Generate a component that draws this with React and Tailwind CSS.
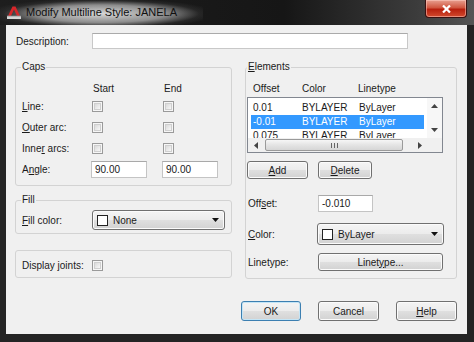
import React from "react";

const U = ({ children }) => <span className="underline underline-offset-[1px]">{children}</span>;

const Check = () => (
  <span className="flex h-[11px] w-[11px] items-center justify-center border border-[#9a9a9a] bg-[#f6f6f6]">
    <span className="h-[7px] w-[7px] border border-[#cfcfcf] bg-[linear-gradient(135deg,#dadada,#f7f7f7)]" />
  </span>
);

const DownTri = () => (
  <svg width="7" height="4" viewBox="0 0 7 4"><path d="M0 0h7L3.5 4z" fill="#111" /></svg>
);

function Btn({ children, className = "", focused = false }) {
  return (
    <div
      className={`flex items-center justify-center rounded-[3px] border bg-[linear-gradient(#f4f4f4_0%,#ececec_48%,#dfdfdf_52%,#d2d2d2_100%)] ${
        focused
          ? "border-[#3c7fb1] shadow-[inset_0_0_0_1px_#c4e5f6]"
          : "border-[#707070] shadow-[inset_0_0_0_1px_#fbfbfb]"
      } ${className}`}
    >
      {children}
    </div>
  );
}

function Combo({ label, className = "" }) {
  return (
    <Btn className={`!justify-start pl-[4px] pr-[5px] ${className}`}>
      <span className="h-[11px] w-[11px] border border-[#222] bg-white" />
      <span className="ml-[5px] flex-1">{label}</span>
      <DownTri />
    </Btn>
  );
}

const TextBox = ({ children, className = "" }) => (
  <div className={`flex items-center bg-white border border-[#c4c4c4] border-t-[#a9a9a9] pl-[3px] ${className}`}>
    {children}
  </div>
);

const Arrow = ({ dir }) => {
  if (dir === "left" || dir === "right") {
    return (
      <svg width="4" height="7" viewBox="0 0 4 7">
        <path d={dir === "left" ? "M4 0v7L0 3.5z" : "M0 0v7L4 3.5z"} fill="#444" />
      </svg>
    );
  }
  return (
    <svg width="7" height="4" viewBox="0 0 7 4">
      <path d={dir === "up" ? "M0 4h7L3.5 0z" : "M0 0h7L3.5 4z"} fill="#444" />
    </svg>
  );
};

const Row = ({ o, c, l, sel = false }) => (
  <div
    className={`grid h-[14px] grid-cols-[49px_57px_1fr] items-center pl-[2px] leading-[14px] ${
      sel ? "bg-[#3399ff] text-white" : ""
    }`}
  >
    <span>{o}</span>
    <span>{c}</span>
    <span>{l}</span>
  </div>
);

export default function App() {
  return (
    <div className="flex h-[342px] w-[474px] flex-col overflow-hidden bg-[#242424] font-['Liberation_Sans',Arial,sans-serif] text-[10px] text-[#1a1a1a]">
      {/* Title bar */}
      <div className="flex h-[25px] items-start bg-[linear-gradient(90deg,#1e1e1e_0%,#161616_60%,#3c3c3c_88%,#555555_100%)]">
        <div className="flex h-[25px] items-center gap-[5px] pl-[7px] pr-[26px] bg-[radial-gradient(ellipse_at_50%_55%,rgba(215,215,215,1)_0%,rgba(160,160,160,0.85)_45%,rgba(60,60,60,0.4)_68%,rgba(30,30,30,0)_80%)]">
          <svg width="14" height="13" viewBox="0 0 14 13">
            <path d="M1 10 L5.5 0.5 L8.5 0.5 L13 10 L10 10 L7 3.5 L4 10Z" fill="#d8262a" />
            <path d="M0 10h14v3H0z" fill="#d6d6d6" />
            <path d="M0 10h14" stroke="#888" strokeWidth="0.8" />
          </svg>
          <span className="text-[11px] text-[#101010]">Modify Multiline Style: JANELA</span>
        </div>
        <div className="ml-auto mr-[7px] flex h-[18px] w-[42px] items-center justify-center rounded-b-[4px] border border-t-0 border-[#3a1010] bg-[linear-gradient(#e8a090_0%,#d0563f_45%,#b8200e_55%,#d24a2e_100%)] shadow-[inset_0_0_0_1px_rgba(255,210,200,0.5)]">
          <svg width="9" height="8" viewBox="0 0 9 8">
            <path d="M1 0.5 L8 7.5 M8 0.5 L1 7.5" stroke="#fff" strokeWidth="2.2" />
          </svg>
        </div>
      </div>

      {/* Client area */}
      <div className="ml-[6px] flex h-[309px] w-[461px] flex-col bg-[#f0f0f0]">
        <div className="mt-[8px] flex h-[16px] items-center pl-[10px]">
          <span className="w-[76px]">Description:</span>
          <div className="h-[16px] w-[316px] border border-[#c8c8c8] border-t-[#aaaaaa] bg-white" />
        </div>

        <div className="mt-[12px] flex gap-[13px] pl-[9px]">
          {/* Left column */}
          <div className="flex w-[217px] flex-col">
            <fieldset className="h-[125px] rounded-[3px] border border-[#d3d3d3] px-[5px]">
              <legend className="h-[12px] px-[1px] leading-[12px]">Caps</legend>
              <div className="grid grid-cols-[70px_71px_60px] pl-[1px] pt-[7px]">
                <span className="h-[16px]" />
                <span className="flex h-[16px] items-center pl-[1px]">Start</span>
                <span className="flex h-[16px] items-center pl-[1px]">End</span>

                <span className="flex h-[21px] items-center"><span><U>L</U>ine:</span></span>
                <span className="flex h-[21px] items-center"><Check /></span>
                <span className="flex h-[21px] items-center"><Check /></span>

                <span className="flex h-[21px] items-center"><span><U>O</U>uter arc:</span></span>
                <span className="flex h-[21px] items-center"><Check /></span>
                <span className="flex h-[21px] items-center"><Check /></span>

                <span className="flex h-[21px] items-center"><span>Inne<U>r</U> arcs:</span></span>
                <span className="flex h-[21px] items-center"><Check /></span>
                <span className="flex h-[21px] items-center"><Check /></span>

                <span className="flex h-[21px] items-center"><span>A<U>n</U>gle:</span></span>
                <span className="flex h-[21px] items-center">
                  <TextBox className="-ml-[1px] h-[17px] w-[56px]">90.00</TextBox>
                </span>
                <span className="flex h-[21px] items-center">
                  <TextBox className="-ml-[1px] h-[17px] w-[56px]">90.00</TextBox>
                </span>
              </div>
            </fieldset>

            <fieldset className="mt-[8px] h-[40px] rounded-[3px] border border-[#d3d3d3] px-[5px]">
              <legend className="h-[12px] px-[1px] leading-[12px]">Fill</legend>
              <div className="flex items-center pl-[1px] pt-[4px]">
                <span className="w-[70px]"><U>F</U>ill color:</span>
                <Combo label="None" className="h-[20px] w-[133px]" />
              </div>
            </fieldset>

            <div className="mt-[16px] flex h-[28px] items-center rounded-[3px] border border-[#d3d3d3] pl-[6px] pt-[3px]">
              <span className="w-[70px]">Display joints:</span>
              <Check />
            </div>
          </div>

          {/* Right column */}
          <fieldset className="h-[218px] w-[212px] rounded-[3px] border border-[#d3d3d3] px-[1px]">
            <legend className="h-[12px] px-[1px] leading-[12px]"><U>E</U>lements</legend>
            <div className="flex flex-col pt-[7px]">
              <div className="grid h-[16px] grid-cols-[49px_56px_1fr] items-center pl-[6px]">
                <span>Offset</span>
                <span>Color</span>
                <span>Linetype</span>
              </div>

              <div className="mt-[1px] flex h-[56px] w-[196px] flex-col border border-[#828790] bg-white">
                <div className="flex h-[40px]">
                  <div className="w-[179px] overflow-hidden px-[3px] pt-[3px]">
                    <Row o="0.01" c="BYLAYER" l="ByLayer" />
                    <Row o="-0.01" c="BYLAYER" l="ByLayer" sel />
                    <Row o="0.075" c="BYLAYER" l="ByLayer" />
                  </div>
                  <div className="flex w-[15px] flex-col items-center justify-between bg-[#f7f7f7] py-[6px]">
                    <Arrow dir="up" />
                    <Arrow dir="down" />
                  </div>
                </div>
                <div className="flex h-[14px]">
                  <div className="flex w-[179px] items-center bg-[#f0f0f0]">
                    <span className="flex w-[15px] justify-center"><Arrow dir="left" /></span>
                    <div className="ml-[2px] flex h-[12px] w-[138px] items-center justify-center rounded-[2px] border border-[#9a9a9a] bg-[linear-gradient(#f6f6f6,#e4e4e4_50%,#d6d6d6)]">
                      <svg width="7" height="5" viewBox="0 0 7 5">
                        <path d="M0.5 0v5M3.5 0v5M6.5 0v5" stroke="#666" strokeWidth="1" />
                      </svg>
                    </div>
                    <span className="flex-1" />
                    <span className="flex w-[15px] justify-center"><Arrow dir="right" /></span>
                  </div>
                  <div className="w-[15px] bg-[#f0f0f0]" />
                </div>
              </div>

              <div className="mt-[8px] flex gap-[10px]">
                <Btn className="h-[18px] w-[61px]"><span><U>A</U>dd</span></Btn>
                <Btn className="h-[18px] w-[54px]"><span><U>D</U>elete</span></Btn>
              </div>

              <div className="mt-[16px] flex h-[17px] items-center">
                <span className="w-[71px] pl-[1px]">Off<U>s</U>et:</span>
                <TextBox className="h-[17px] w-[55px]">-0.010</TextBox>
              </div>

              <div className="mt-[11px] flex h-[22px] items-center">
                <span className="w-[70px] pl-[1px]"><U>C</U>olor:</span>
                <Combo label="ByLayer" className="h-[22px] w-[127px]" />
              </div>

              <div className="mt-[8px] flex h-[18px] items-center">
                <span className="w-[71px] pl-[1px]">Linetype:</span>
                <Btn className="h-[18px] w-[125px]"><span>Linet<U>y</U>pe...</span></Btn>
              </div>
            </div>
          </fieldset>
        </div>

        <div className="mt-[22px] flex justify-end gap-[17px] pr-[10px]">
          <Btn focused className="h-[20px] w-[60px]">OK</Btn>
          <Btn className="h-[20px] w-[61px]">Cancel</Btn>
          <Btn className="h-[20px] w-[61px]"><span><U>H</U>elp</span></Btn>
        </div>
      </div>
    </div>
  );
}
